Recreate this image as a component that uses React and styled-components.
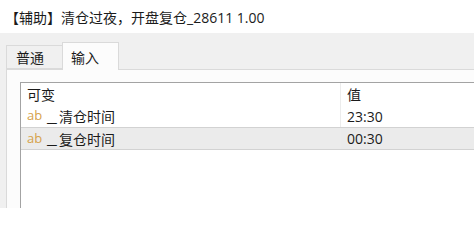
import styled, { createGlobalStyle } from "styled-components";

const GlobalStyle = createGlobalStyle`
  html, body {
    margin: 0;
    padding: 0;
    background: #ffffff;
    overflow: hidden;
  }
  body {
    font-family: "Open Sans", "Noto Sans CJK SC", sans-serif;
    color: #1b1b1b;
  }
`;

const Window = styled.div`
  width: 474px;
  height: 208px;
  display: flex;
  flex-direction: column;
  overflow: hidden;
`;

const TitleBar = styled.div`
  height: 33px;
  flex: none;
  display: flex;
  align-items: center;
  padding-left: 5px;
  font-size: 14px;
  background: #ffffff;
  white-space: nowrap;
`;

const Body = styled.div`
  flex: 1;
  background: #f0f0f0;
  padding: 9px 0 0 6px;
  display: flex;
  flex-direction: column;
`;

const TabStrip = styled.div`
  display: flex;
  align-items: flex-end;
  height: 27px;
  flex: none;
  position: relative;
  z-index: 1;
`;

const Tab = styled.div`
  box-sizing: border-box;
  width: ${(p) => (p.$active ? "57px" : "56px")};
  height: ${(p) => (p.$active ? "28px" : "24px")};
  margin-bottom: ${(p) => (p.$active ? "-1px" : "0")};
  padding-left: ${(p) => (p.$active ? "8px" : "9px")};
  display: flex;
  align-items: center;
  font-size: 14px;
  background: ${(p) => (p.$active ? "#fcfcfc" : "#f0f0f0")};
  border: 1px solid #dadada;
  border-bottom: ${(p) => (p.$active ? "none" : "1px solid #dadada")};
  border-right: ${(p) => (p.$active ? "1px solid #dadada" : "none")};
`;

const Panel = styled.div`
  flex: 1;
  background: #fcfcfc;
  border-top: 1px solid #dadada;
  border-left: 1px solid #dadada;
  padding: 12px 0 0 13px;
  display: flex;
`;

const List = styled.div`
  flex: 1;
  background: #ffffff;
  border-top: 1px solid #a3a3a3;
  border-left: 1px solid #a3a3a3;
  font-size: 14px;
`;

const Row = styled.div`
  display: grid;
  grid-template-columns: 319px 1fr;
  height: ${(p) => (p.$selected ? "21px" : "22px")};
  background: ${(p) => (p.$selected ? "#ebebeb" : "transparent")};
  border-top: ${(p) => (p.$selected ? "1px solid #d2d2d2" : "none")};
  border-bottom: ${(p) => (p.$selected ? "1px solid #d2d2d2" : "none")};
`;

const Cell = styled.div`
  display: flex;
  align-items: center;
  padding-left: 6px;
  border-left: ${(p) => (p.$value ? "1px solid #ececec" : "none")};
  white-space: nowrap;
`;

const TypeTag = styled.span`
  color: #d6a24a;
  font-size: 13px;
  width: 20px;
  margin-bottom: 2px;
`;

const Prefix = styled.span`
  display: inline-block;
  width: 12px;
  transform: scaleX(1.6);
  transform-origin: left center;
`;

const params = [
  { name: "清仓时间", value: "23:30" },
  { name: "复仓时间", value: "00:30", selected: true },
];

const App = () => {
  return (
    <Window>
      <GlobalStyle />
      <TitleBar>【辅助】清仓过夜，开盘复仓_28611 1.00</TitleBar>
      <Body>
        <TabStrip>
          <Tab>普通</Tab>
          <Tab $active>输入</Tab>
        </TabStrip>
        <Panel>
          <List>
            <Row>
              <Cell>可变</Cell>
              <Cell $value>值</Cell>
            </Row>
            {params.map((p) => (
              <Row key={p.name} $selected={p.selected}>
                <Cell>
                  <TypeTag>ab</TypeTag>
                  <Prefix>_</Prefix>
                  {p.name}
                </Cell>
                <Cell $value>{p.value}</Cell>
              </Row>
            ))}
          </List>
        </Panel>
      </Body>
    </Window>
  );
};

export default App;
